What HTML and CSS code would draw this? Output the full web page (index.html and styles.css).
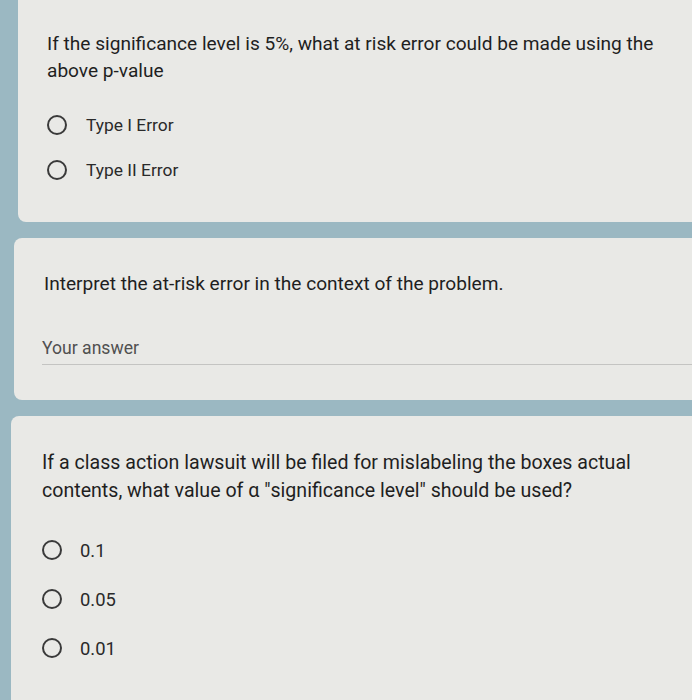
FILE: index.html
```html
<!DOCTYPE html>
<html>
<head>
<meta charset="utf-8">
<link rel="stylesheet" href="styles.css">
</head>
<body>
<div class="page">
  <section class="card card-1">
    <h2 class="question">If the significance level is 5%, what at risk error could be made using the above p-value</h2>
    <div class="options options-1">
      <label class="option"><span class="radio"></span><span class="label">Type I Error</span></label>
      <label class="option"><span class="radio"></span><span class="label">Type II Error</span></label>
    </div>
  </section>
  <section class="card card-2">
    <h2 class="question">Interpret the at-risk error in the context of the problem.</h2>
    <div class="answer">Your answer</div>
  </section>
  <section class="card card-3">
    <h2 class="question">If a class action lawsuit will be filed for mislabeling the boxes actual contents, what value of α "significance level" should be used?</h2>
    <div class="options options-3">
      <label class="option"><span class="radio"></span><span class="label">0.1</span></label>
      <label class="option"><span class="radio"></span><span class="label">0.05</span></label>
      <label class="option"><span class="radio"></span><span class="label">0.01</span></label>
    </div>
  </section>
</div>
</body>
</html>
```
FILE: styles.css
```css
html, body {
  margin: 0;
  padding: 0;
  background: #9bb8c2;
  overflow: hidden;
  width: 692px;
  height: 700px;
}
body {
  font-family: Roboto, "Liberation Sans", sans-serif;
  color: #262626;
}
.page {
  display: flex;
  flex-direction: column;
  gap: 16px;
}
.card {
  background: #e9e9e6;
  border-radius: 8px 0 0 8px;
  width: 720px;
  box-sizing: border-box;
}
.card-1 {
  margin-left: 18px;
  margin-top: -8px;
  height: 230px;
  padding: 38px 0 0 29px;
}
.card-2 {
  margin-left: 14px;
  height: 162px;
  padding: 32px 0 0 30px;
}
.card-3 {
  margin-left: 11px;
  height: 300px;
  padding: 33px 0 0 31px;
}
.question {
  margin: 0;
  font-size: 19.1px;
  font-weight: 400;
  line-height: 27px;
  width: 625px;
  color: #1f1f1f;
}
.card-3 .question {
  width: 610px;
  font-size: 19.6px;
  line-height: 28px;
}
.options {
  display: flex;
  flex-direction: column;
}
.options-1 {
  margin-top: 30px;
  gap: 23px;
}
.options-3 {
  margin-top: 34px;
  gap: 27px;
}
.option {
  display: flex;
  align-items: center;
  height: 22px;
}
.radio {
  width: 16px;
  height: 16px;
  border: 2.5px solid #3a3a3a;
  border-radius: 50%;
  flex: none;
}
.options-1 .radio { margin-right: 19px; }
.options-3 .radio { margin-right: 18px; }
.label {
  font-size: 17.4px;
  color: #2a2a2a;
}
.options-3 .label { font-size: 18.4px; }
.answer {
  margin-top: 41px;
  font-size: 17.6px;
  color: #505050;
  padding-bottom: 6px;
  border-bottom: 1px solid #c4c4c2;
  margin-left: -2px;
}
```
